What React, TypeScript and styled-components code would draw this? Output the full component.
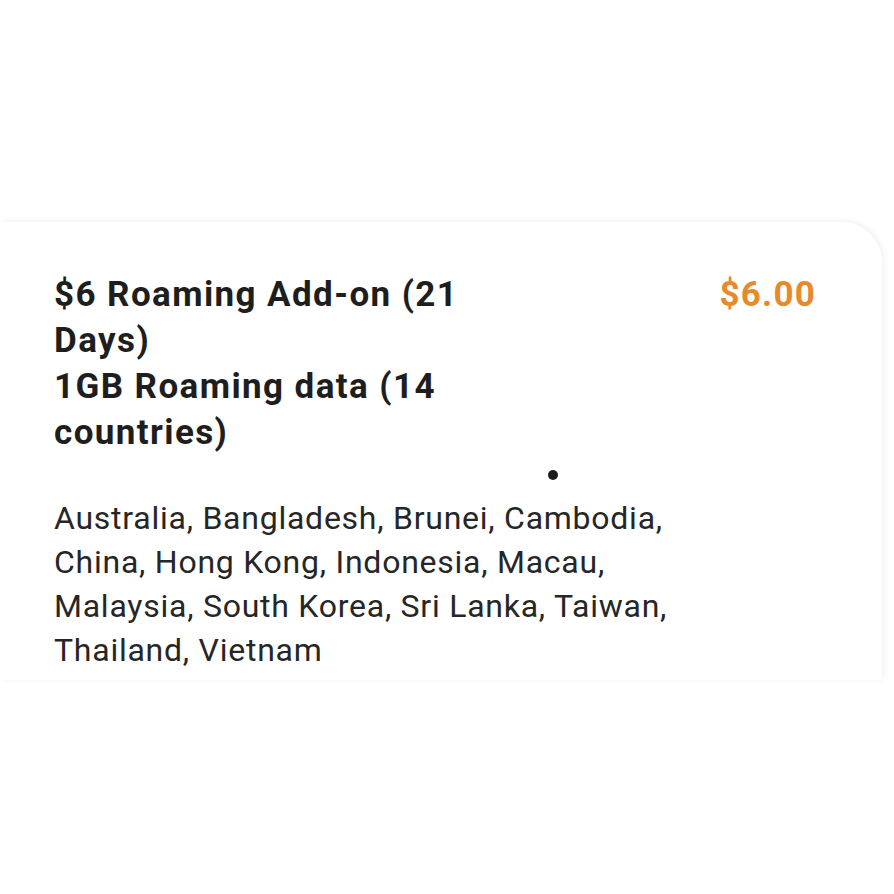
import React from 'react';
import styled, { createGlobalStyle } from 'styled-components';

const GlobalStyle = createGlobalStyle`
  html, body {
    margin: 0;
    padding: 0;
    background: #ffffff;
  }
  body {
    font-family: Roboto, "Liberation Sans", sans-serif;
    color: #1c1c1c;
  }
`;

const Page = styled.main`
  width: 894px;
  height: 894px;
  overflow: hidden;
  padding-top: 222px;
  box-sizing: border-box;
`;

const Card = styled.section`
  width: 882px;
  height: 458px;
  box-sizing: border-box;
  background: #ffffff;
  border-radius: 0 40px 0 0;
  box-shadow: 2px -1px 6px rgba(0, 0, 0, 0.06);
  padding: 50px 66px 0 54px;
`;

const Header = styled.div`
  display: flex;
  justify-content: space-between;
  align-items: flex-start;
`;

const Title = styled.h2`
  margin: 0;
  max-width: 430px;
  font-size: 35px;
  line-height: 46px;
  font-weight: 700;
  letter-spacing: 1.4px;
  color: #1e1e1e;
`;

const Line = styled.span`
  display: block;
`;

const Price = styled.div`
  font-size: 35px;
  line-height: 46px;
  font-weight: 700;
  letter-spacing: 1.2px;
  color: #e8892b;
`;

const Dot = styled.div`
  width: 10px;
  height: 10px;
  border-radius: 50%;
  background: #1c1c1c;
  margin: 14px 0 0 494px;
`;

const Countries = styled.p`
  margin: 16px 0 0;
  max-width: 640px;
  font-size: 32px;
  line-height: 44px;
  font-weight: 400;
  letter-spacing: 0.75px;
  color: #262626;
`;

const App: React.FC = () => {
  return (
    <>
      <GlobalStyle />
      <Page>
        <Card>
          <Header>
            <Title>
              <Line>$6 Roaming Add-on (21 Days)</Line>
              <Line>1GB Roaming data (14 countries)</Line>
            </Title>
            <Price>$6.00</Price>
          </Header>
          <Dot />
          <Countries>
            Australia, Bangladesh, Brunei, Cambodia, China, Hong Kong, Indonesia, Macau,
            Malaysia, South Korea, Sri Lanka, Taiwan, Thailand, Vietnam
          </Countries>
        </Card>
      </Page>
    </>
  );
};

export default App;
